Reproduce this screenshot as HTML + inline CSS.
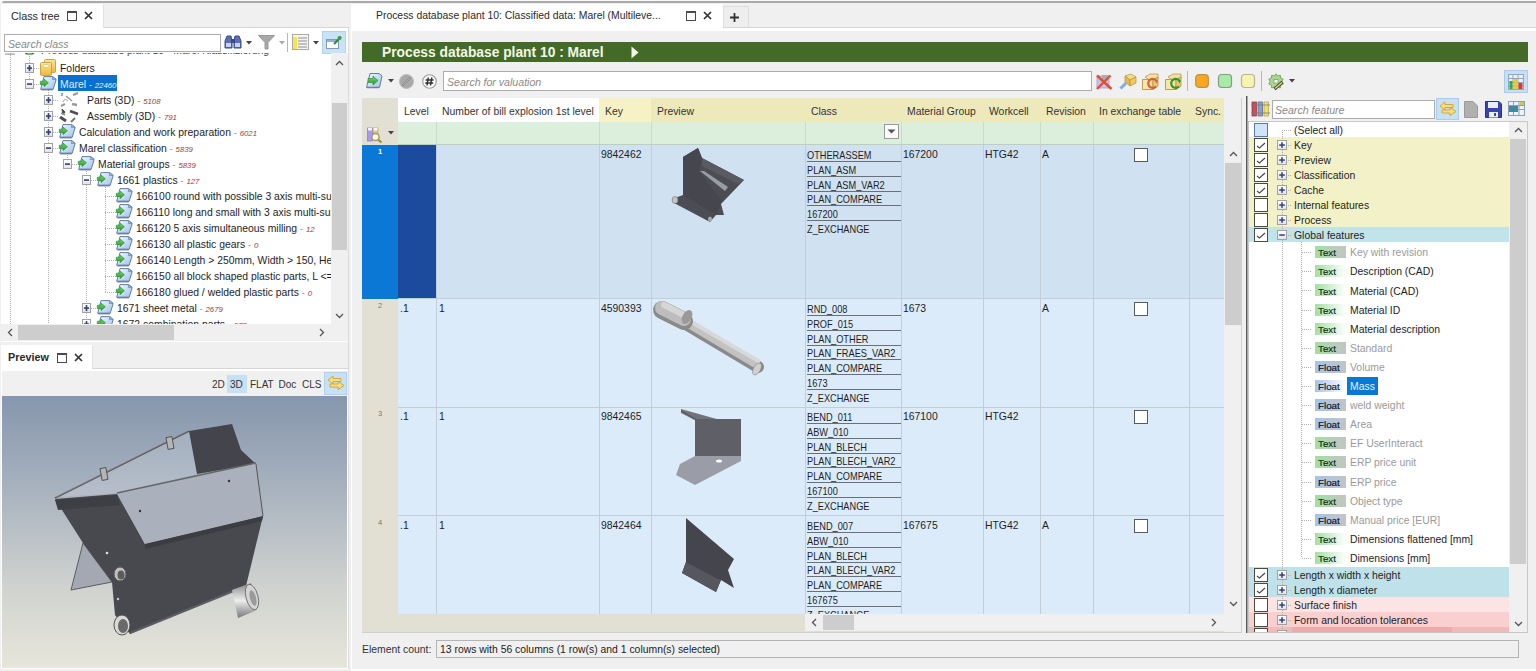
<!DOCTYPE html><html><head><meta charset="utf-8"><style>
*{margin:0;padding:0;box-sizing:border-box}
html,body{width:1536px;height:671px;overflow:hidden}
body{background:#f0f0f0;font-family:"Liberation Sans",sans-serif;font-size:10.4px;color:#1e1e1e;position:relative}
.a{position:absolute}
.t{position:absolute;white-space:nowrap;line-height:12px}
.cnt{font-style:italic;color:#a8383c;font-size:7.8px}
.dash{color:#888;font-size:9px}
.clip{position:absolute;overflow:hidden}
svg{position:absolute;overflow:visible}
</style></head><body>
<svg width="0" height="0" style="position:absolute"><defs>
<linearGradient id="gpage" x1="0" y1="0" x2="1" y2="1"><stop offset="0" stop-color="#f4f9ff"/><stop offset="1" stop-color="#9fc1ea"/></linearGradient>
<linearGradient id="gfold" x1="0" y1="0" x2="0" y2="1"><stop offset="0" stop-color="#fbe59a"/><stop offset="1" stop-color="#f2b53c"/></linearGradient>
<linearGradient id="garrow" x1="0" y1="0" x2="0" y2="1"><stop offset="0" stop-color="#7fd86a"/><stop offset="1" stop-color="#1f9a2a"/></linearGradient>
<linearGradient id="gbox" x1="0" y1="0" x2="0" y2="1"><stop offset="0" stop-color="#ffffff"/><stop offset="1" stop-color="#dfe3ea"/></linearGradient>
<linearGradient id="gprev" x1="0" y1="0" x2="0" y2="1"><stop offset="0" stop-color="#8797ad"/><stop offset="0.55" stop-color="#b9c0c6"/><stop offset="1" stop-color="#e6e5da"/></linearGradient>
<linearGradient id="grod" x1="0" y1="0" x2="0.3" y2="1"><stop offset="0" stop-color="#c9c9c9"/><stop offset="0.5" stop-color="#e0e0e0"/><stop offset="1" stop-color="#777"/></linearGradient>
<linearGradient id="gtube" x1="0" y1="0" x2="0" y2="1"><stop offset="0" stop-color="#888"/><stop offset="0.5" stop-color="#eee"/><stop offset="1" stop-color="#777"/></linearGradient>
</defs></svg>
<div class="a" style="left:0px;top:0px;width:1536px;height:3px;background:#fafafa"></div>
<div class="a" style="left:2px;top:1px;width:1534px;height:2px;background:#aaaaaa;border-radius:3px 0 0 0"></div>
<div class="a" style="left:1px;top:4px;width:102px;height:25px;background:#fff"></div>
<div class="a" style="left:103px;top:27px;width:246px;height:1px;background:#d6d6d6"></div>
<div class="a" style="left:103px;top:5px;width:1px;height:23px;background:#e2e2e2"></div>
<div class="t" style="left:11px;top:10px;font-size:10.8px;color:#2a2a2a">Class tree</div>
<div class="a" style="left:67px;top:11px;width:10px;height:10px;border:1.3px solid #4a4a4a;border-top-width:2.3px"></div>
<svg style="left:84px;top:11px" width="9" height="9" viewBox="0 0 9 9"><path d="M1 1L8 8M8 1L1 8" stroke="#333" stroke-width="1.7"/></svg>
<div class="a" style="left:1px;top:28px;width:348px;height:314px;background:#fff"></div>
<div class="a" style="left:348px;top:28px;width:1px;height:314px;background:#dcdcdc"></div>
<div class="a" style="left:4px;top:34px;width:217px;height:18px;background:#fff;border:1px solid #acacac"></div>
<div class="t" style="left:8px;top:38px;font-style:italic;color:#8a8a8a;font-size:10.6px">Search class</div>
<svg style="left:224px;top:35px" width="18" height="15" viewBox="0 0 18 15"><path d="M1 13V6L3 1H7L8 6V13Z" fill="#5c6fb0" stroke="#3a4a8a"/><path d="M10 13V6L11 1H15L17 6V13Z" fill="#5c6fb0" stroke="#3a4a8a"/><rect x="2" y="8" width="5" height="4" fill="#c9d2f0"/><rect x="11" y="8" width="5" height="4" fill="#c9d2f0"/><rect x="7" y="4" width="4" height="4" fill="#3a4a8a"/></svg>
<svg style="left:246px;top:41px" width="6" height="4" viewBox="0 0 6 4"><path d="M0 0H6L3 3.5Z" fill="#444"/></svg>
<svg style="left:258px;top:35px" width="17" height="15" viewBox="0 0 17 15"><path d="M0.5 0.5H16.5L10 7.5V14H7V7.5Z" fill="#a8a8a8" stroke="#999"/></svg>
<svg style="left:279px;top:41px" width="6" height="4" viewBox="0 0 6 4"><path d="M0 0H6L3 3.5Z" fill="#aaa"/></svg>
<div class="a" style="left:287px;top:33px;width:1px;height:19px;background:#b8b8b8"></div>
<svg style="left:292px;top:34px" width="17" height="17" viewBox="0 0 17 17"><rect x="0.5" y="0.5" width="16" height="15" fill="#f4f4f4" stroke="#aaa"/><rect x="1" y="3" width="4" height="12" fill="#f6e64a"/><path d="M6 4H15M6 7H15M6 10H15M6 13H15" stroke="#b0b0b0" stroke-width="1.4"/></svg>
<svg style="left:313px;top:41px" width="6" height="4" viewBox="0 0 6 4"><path d="M0 0H6L3 3.5Z" fill="#444"/></svg>
<div class="a" style="left:322px;top:31px;width:24px;height:23px;background:#c8e2f8;border:1px solid #b2d2ee"></div>
<svg style="left:326px;top:35px" width="16" height="14" viewBox="0 0 16 14"><rect x="0.5" y="4.5" width="12" height="9" fill="#fff" stroke="#8a9ab0"/><rect x="1" y="5" width="11" height="2" fill="#9ab0c8"/><path d="M8 9L15 2" stroke="#2f8a3a" stroke-width="2.2"/><circle cx="13.5" cy="3" r="2" fill="#3aa048"/></svg>
<div class="clip" style="left:1px;top:53px;width:330px;height:271px">
<div class="a" style="left:9px;top:0px;width:1px;height:271px;background:repeating-linear-gradient(#b0b0b0 0 1px,transparent 1px 2px)"></div>
<div class="a" style="left:28px;top:3px;width:1px;height:28px;background:repeating-linear-gradient(#b0b0b0 0 1px,transparent 1px 2px)"></div>
<div class="a" style="left:47px;top:35px;width:1px;height:236px;background:repeating-linear-gradient(#b0b0b0 0 1px,transparent 1px 2px)"></div>
<div class="a" style="left:66px;top:100px;width:1px;height:11px;background:repeating-linear-gradient(#b0b0b0 0 1px,transparent 1px 2px)"></div>
<div class="a" style="left:85px;top:116px;width:1px;height:155px;background:repeating-linear-gradient(#b0b0b0 0 1px,transparent 1px 2px)"></div>
<div class="a" style="left:104px;top:132px;width:1px;height:107px;background:repeating-linear-gradient(#b0b0b0 0 1px,transparent 1px 2px)"></div>
<div class="t" style="left:40px;top:-8px;color:#444">Process database plant 10 - Marel Klassifizierung</div>
<svg style="left:20px;top:-7px" width="17" height="10" viewBox="0 0 17 10"><path d="M1 4L16 4L12 8.5L5 8.5Z" fill="#556"/><ellipse cx="8.5" cy="7" rx="2.5" ry="2" fill="#5ac85a"/></svg>
<svg style="left:4px;top:0px" width="10" height="2" viewBox="0 0 10 2"><rect x="0" y="0.5" width="10" height="1.2" fill="#999"/></svg>
<svg style="left:24px;top:10px" width="9" height="10" viewBox="0 0 9 10"><rect x="0.5" y="0.5" width="8" height="9" fill="url(#gbox)" stroke="#a2a2a2"/><rect x="2" y="4.3" width="5" height="1.6" fill="#34427a"/><rect x="3.7" y="2.1" width="1.6" height="6" fill="#34427a"/></svg>
<div class="a" style="left:33px;top:15px;width:6px;height:1px;background:repeating-linear-gradient(90deg,#b0b0b0 0 1px,transparent 1px 2px)"></div>
<svg style="left:39px;top:6px" width="17" height="17" viewBox="0 0 17 17"><rect x="4.5" y="0.5" width="11" height="13" rx="1" fill="url(#gfold)" stroke="#caa24a"/><rect x="0.5" y="3.5" width="11" height="13" rx="1" fill="url(#gfold)" stroke="#caa24a"/><rect x="3" y="5.5" width="6" height="3" rx="1.2" fill="#fff4cf" stroke="#d9b45a" stroke-width="0.6"/></svg>
<div class="t" style="left:59px;top:10px;">Folders</div>
<svg style="left:24px;top:26px" width="9" height="10" viewBox="0 0 9 10"><rect x="0.5" y="0.5" width="8" height="9" fill="url(#gbox)" stroke="#a2a2a2"/><rect x="2" y="4.3" width="5" height="1.6" fill="#34427a"/></svg>
<div class="a" style="left:33px;top:31px;width:6px;height:1px;background:repeating-linear-gradient(90deg,#b0b0b0 0 1px,transparent 1px 2px)"></div>
<svg style="left:39px;top:23px" width="17" height="15" viewBox="0 0 17 15"><path d="M4 0.6H12.7L16.2 3.4L13.2 13.3H0.7Z" fill="url(#gpage)" stroke="#5d7fae" stroke-width="1"/><path d="M12.7 0.8L12.3 3.6L16 3.4Z" fill="#9ab4dc" stroke="#5d7fae" stroke-width="0.6"/><path d="M12.8 13.6H1.2" stroke="#6f7f9a" stroke-width="1.6"/><path d="M0.3 5.2H4V3L8.4 6.8L4 10.6V8.5H0.3Z" fill="url(#garrow)" stroke="#1d8a26" stroke-width="0.6"/></svg>
<div class="a" style="left:57px;top:22px;width:59px;height:16px;background:#0a6fcf"></div>
<div class="t" style="left:59px;top:26px;color:#dff0ff">Marel <span style="font-size:9px">-</span> <span class="cnt" style="color:#e8f4ff">22460</span></div>
<svg style="left:43px;top:42px" width="9" height="10" viewBox="0 0 9 10"><rect x="0.5" y="0.5" width="8" height="9" fill="url(#gbox)" stroke="#a2a2a2"/><rect x="2" y="4.3" width="5" height="1.6" fill="#34427a"/><rect x="3.7" y="2.1" width="1.6" height="6" fill="#34427a"/></svg>
<div class="a" style="left:52px;top:47px;width:6px;height:1px;background:repeating-linear-gradient(90deg,#b0b0b0 0 1px,transparent 1px 2px)"></div>
<svg style="left:59px;top:39px" width="19" height="15" viewBox="0 0 19 15"><g stroke="#9a9a9a" fill="none"><path d="M1 1L3 4M3 1L1 4"/><path d="M13 3L18 1" stroke-width="2"/><path d="M6 4L12 9" stroke-width="1.5"/><path d="M3 10C4 7 6 7 8 9"/><path d="M1 14L5 12" stroke-width="2"/><path d="M12 12L17 13" stroke-width="2.5"/></g></svg>
<div class="t" style="left:86px;top:42px;">Parts (3D) <span class="dash">-</span> <span class="cnt">5108</span></div>
<svg style="left:43px;top:58px" width="9" height="10" viewBox="0 0 9 10"><rect x="0.5" y="0.5" width="8" height="9" fill="url(#gbox)" stroke="#a2a2a2"/><rect x="2" y="4.3" width="5" height="1.6" fill="#34427a"/><rect x="3.7" y="2.1" width="1.6" height="6" fill="#34427a"/></svg>
<div class="a" style="left:52px;top:63px;width:6px;height:1px;background:repeating-linear-gradient(90deg,#b0b0b0 0 1px,transparent 1px 2px)"></div>
<svg style="left:59px;top:55px" width="19" height="15" viewBox="0 0 19 15"><g stroke="#4e4e4e" fill="#4e4e4e"><path d="M2 1L5 4L3 7Z"/><path d="M10 3L18 6" stroke-width="2.5"/><path d="M0 9L6 13" stroke-width="3"/><path d="M11 14L15 10" stroke-width="2" stroke="#777"/><path d="M1 5L5 7" stroke="#999" stroke-width="1.5"/></g></svg>
<div class="t" style="left:86px;top:58px;">Assembly (3D) <span class="dash">-</span> <span class="cnt">791</span></div>
<svg style="left:43px;top:74px" width="9" height="10" viewBox="0 0 9 10"><rect x="0.5" y="0.5" width="8" height="9" fill="url(#gbox)" stroke="#a2a2a2"/><rect x="2" y="4.3" width="5" height="1.6" fill="#34427a"/><rect x="3.7" y="2.1" width="1.6" height="6" fill="#34427a"/></svg>
<div class="a" style="left:52px;top:79px;width:6px;height:1px;background:repeating-linear-gradient(90deg,#b0b0b0 0 1px,transparent 1px 2px)"></div>
<svg style="left:58px;top:71px" width="17" height="15" viewBox="0 0 17 15"><path d="M4 0.6H12.7L16.2 3.4L13.2 13.3H0.7Z" fill="url(#gpage)" stroke="#5d7fae" stroke-width="1"/><path d="M12.7 0.8L12.3 3.6L16 3.4Z" fill="#9ab4dc" stroke="#5d7fae" stroke-width="0.6"/><path d="M12.8 13.6H1.2" stroke="#6f7f9a" stroke-width="1.6"/><path d="M0.3 5.2H4V3L8.4 6.8L4 10.6V8.5H0.3Z" fill="url(#garrow)" stroke="#1d8a26" stroke-width="0.6"/></svg>
<div class="t" style="left:78px;top:74px;">Calculation and work preparation <span class="dash">-</span> <span class="cnt">6021</span></div>
<svg style="left:43px;top:90px" width="9" height="10" viewBox="0 0 9 10"><rect x="0.5" y="0.5" width="8" height="9" fill="url(#gbox)" stroke="#a2a2a2"/><rect x="2" y="4.3" width="5" height="1.6" fill="#34427a"/></svg>
<div class="a" style="left:52px;top:95px;width:6px;height:1px;background:repeating-linear-gradient(90deg,#b0b0b0 0 1px,transparent 1px 2px)"></div>
<svg style="left:58px;top:87px" width="17" height="15" viewBox="0 0 17 15"><path d="M4 0.6H12.7L16.2 3.4L13.2 13.3H0.7Z" fill="url(#gpage)" stroke="#5d7fae" stroke-width="1"/><path d="M12.7 0.8L12.3 3.6L16 3.4Z" fill="#9ab4dc" stroke="#5d7fae" stroke-width="0.6"/><path d="M12.8 13.6H1.2" stroke="#6f7f9a" stroke-width="1.6"/><path d="M0.3 5.2H4V3L8.4 6.8L4 10.6V8.5H0.3Z" fill="url(#garrow)" stroke="#1d8a26" stroke-width="0.6"/></svg>
<div class="t" style="left:78px;top:90px;">Marel classification <span class="dash">-</span> <span class="cnt">5839</span></div>
<svg style="left:62px;top:106px" width="9" height="10" viewBox="0 0 9 10"><rect x="0.5" y="0.5" width="8" height="9" fill="url(#gbox)" stroke="#a2a2a2"/><rect x="2" y="4.3" width="5" height="1.6" fill="#34427a"/></svg>
<div class="a" style="left:71px;top:111px;width:6px;height:1px;background:repeating-linear-gradient(90deg,#b0b0b0 0 1px,transparent 1px 2px)"></div>
<svg style="left:77px;top:103px" width="17" height="15" viewBox="0 0 17 15"><path d="M4 0.6H12.7L16.2 3.4L13.2 13.3H0.7Z" fill="url(#gpage)" stroke="#5d7fae" stroke-width="1"/><path d="M12.7 0.8L12.3 3.6L16 3.4Z" fill="#9ab4dc" stroke="#5d7fae" stroke-width="0.6"/><path d="M12.8 13.6H1.2" stroke="#6f7f9a" stroke-width="1.6"/><path d="M0.3 5.2H4V3L8.4 6.8L4 10.6V8.5H0.3Z" fill="url(#garrow)" stroke="#1d8a26" stroke-width="0.6"/></svg>
<div class="t" style="left:97px;top:106px;">Material groups <span class="dash">-</span> <span class="cnt">5839</span></div>
<svg style="left:81px;top:122px" width="9" height="10" viewBox="0 0 9 10"><rect x="0.5" y="0.5" width="8" height="9" fill="url(#gbox)" stroke="#a2a2a2"/><rect x="2" y="4.3" width="5" height="1.6" fill="#34427a"/></svg>
<div class="a" style="left:90px;top:127px;width:6px;height:1px;background:repeating-linear-gradient(90deg,#b0b0b0 0 1px,transparent 1px 2px)"></div>
<svg style="left:96px;top:119px" width="17" height="15" viewBox="0 0 17 15"><path d="M4 0.6H12.7L16.2 3.4L13.2 13.3H0.7Z" fill="url(#gpage)" stroke="#5d7fae" stroke-width="1"/><path d="M12.7 0.8L12.3 3.6L16 3.4Z" fill="#9ab4dc" stroke="#5d7fae" stroke-width="0.6"/><path d="M12.8 13.6H1.2" stroke="#6f7f9a" stroke-width="1.6"/><path d="M0.3 5.2H4V3L8.4 6.8L4 10.6V8.5H0.3Z" fill="url(#garrow)" stroke="#1d8a26" stroke-width="0.6"/></svg>
<div class="t" style="left:116px;top:122px;">1661 plastics <span class="dash">-</span> <span class="cnt">127</span></div>
<div class="a" style="left:104px;top:143px;width:11px;height:1px;background:repeating-linear-gradient(90deg,#b0b0b0 0 1px,transparent 1px 2px)"></div>
<svg style="left:115px;top:135px" width="17" height="15" viewBox="0 0 17 15"><path d="M4 0.6H12.7L16.2 3.4L13.2 13.3H0.7Z" fill="url(#gpage)" stroke="#5d7fae" stroke-width="1"/><path d="M12.7 0.8L12.3 3.6L16 3.4Z" fill="#9ab4dc" stroke="#5d7fae" stroke-width="0.6"/><path d="M12.8 13.6H1.2" stroke="#6f7f9a" stroke-width="1.6"/><path d="M0.3 5.2H4V3L8.4 6.8L4 10.6V8.5H0.3Z" fill="url(#garrow)" stroke="#1d8a26" stroke-width="0.6"/></svg>
<div class="t" style="left:135px;top:138px;">166100 round with possible 3 axis multi-surface milling</div>
<div class="a" style="left:104px;top:159px;width:11px;height:1px;background:repeating-linear-gradient(90deg,#b0b0b0 0 1px,transparent 1px 2px)"></div>
<svg style="left:115px;top:151px" width="17" height="15" viewBox="0 0 17 15"><path d="M4 0.6H12.7L16.2 3.4L13.2 13.3H0.7Z" fill="url(#gpage)" stroke="#5d7fae" stroke-width="1"/><path d="M12.7 0.8L12.3 3.6L16 3.4Z" fill="#9ab4dc" stroke="#5d7fae" stroke-width="0.6"/><path d="M12.8 13.6H1.2" stroke="#6f7f9a" stroke-width="1.6"/><path d="M0.3 5.2H4V3L8.4 6.8L4 10.6V8.5H0.3Z" fill="url(#garrow)" stroke="#1d8a26" stroke-width="0.6"/></svg>
<div class="t" style="left:135px;top:154px;">166110 long and small with 3 axis multi-surface milling</div>
<div class="a" style="left:104px;top:175px;width:11px;height:1px;background:repeating-linear-gradient(90deg,#b0b0b0 0 1px,transparent 1px 2px)"></div>
<svg style="left:115px;top:167px" width="17" height="15" viewBox="0 0 17 15"><path d="M4 0.6H12.7L16.2 3.4L13.2 13.3H0.7Z" fill="url(#gpage)" stroke="#5d7fae" stroke-width="1"/><path d="M12.7 0.8L12.3 3.6L16 3.4Z" fill="#9ab4dc" stroke="#5d7fae" stroke-width="0.6"/><path d="M12.8 13.6H1.2" stroke="#6f7f9a" stroke-width="1.6"/><path d="M0.3 5.2H4V3L8.4 6.8L4 10.6V8.5H0.3Z" fill="url(#garrow)" stroke="#1d8a26" stroke-width="0.6"/></svg>
<div class="t" style="left:135px;top:170px;">166120 5 axis simultaneous milling <span class="dash">-</span> <span class="cnt">12</span></div>
<div class="a" style="left:104px;top:191px;width:11px;height:1px;background:repeating-linear-gradient(90deg,#b0b0b0 0 1px,transparent 1px 2px)"></div>
<svg style="left:115px;top:183px" width="17" height="15" viewBox="0 0 17 15"><path d="M4 0.6H12.7L16.2 3.4L13.2 13.3H0.7Z" fill="url(#gpage)" stroke="#5d7fae" stroke-width="1"/><path d="M12.7 0.8L12.3 3.6L16 3.4Z" fill="#9ab4dc" stroke="#5d7fae" stroke-width="0.6"/><path d="M12.8 13.6H1.2" stroke="#6f7f9a" stroke-width="1.6"/><path d="M0.3 5.2H4V3L8.4 6.8L4 10.6V8.5H0.3Z" fill="url(#garrow)" stroke="#1d8a26" stroke-width="0.6"/></svg>
<div class="t" style="left:135px;top:186px;">166130 all plastic gears <span class="dash">-</span> <span class="cnt">0</span></div>
<div class="a" style="left:104px;top:207px;width:11px;height:1px;background:repeating-linear-gradient(90deg,#b0b0b0 0 1px,transparent 1px 2px)"></div>
<svg style="left:115px;top:199px" width="17" height="15" viewBox="0 0 17 15"><path d="M4 0.6H12.7L16.2 3.4L13.2 13.3H0.7Z" fill="url(#gpage)" stroke="#5d7fae" stroke-width="1"/><path d="M12.7 0.8L12.3 3.6L16 3.4Z" fill="#9ab4dc" stroke="#5d7fae" stroke-width="0.6"/><path d="M12.8 13.6H1.2" stroke="#6f7f9a" stroke-width="1.6"/><path d="M0.3 5.2H4V3L8.4 6.8L4 10.6V8.5H0.3Z" fill="url(#garrow)" stroke="#1d8a26" stroke-width="0.6"/></svg>
<div class="t" style="left:135px;top:202px;">166140 Length &gt; 250mm, Width &gt; 150, Height</div>
<div class="a" style="left:104px;top:223px;width:11px;height:1px;background:repeating-linear-gradient(90deg,#b0b0b0 0 1px,transparent 1px 2px)"></div>
<svg style="left:115px;top:215px" width="17" height="15" viewBox="0 0 17 15"><path d="M4 0.6H12.7L16.2 3.4L13.2 13.3H0.7Z" fill="url(#gpage)" stroke="#5d7fae" stroke-width="1"/><path d="M12.7 0.8L12.3 3.6L16 3.4Z" fill="#9ab4dc" stroke="#5d7fae" stroke-width="0.6"/><path d="M12.8 13.6H1.2" stroke="#6f7f9a" stroke-width="1.6"/><path d="M0.3 5.2H4V3L8.4 6.8L4 10.6V8.5H0.3Z" fill="url(#garrow)" stroke="#1d8a26" stroke-width="0.6"/></svg>
<div class="t" style="left:135px;top:218px;">166150 all block shaped plastic parts, L &lt;= 250</div>
<div class="a" style="left:104px;top:239px;width:11px;height:1px;background:repeating-linear-gradient(90deg,#b0b0b0 0 1px,transparent 1px 2px)"></div>
<svg style="left:115px;top:231px" width="17" height="15" viewBox="0 0 17 15"><path d="M4 0.6H12.7L16.2 3.4L13.2 13.3H0.7Z" fill="url(#gpage)" stroke="#5d7fae" stroke-width="1"/><path d="M12.7 0.8L12.3 3.6L16 3.4Z" fill="#9ab4dc" stroke="#5d7fae" stroke-width="0.6"/><path d="M12.8 13.6H1.2" stroke="#6f7f9a" stroke-width="1.6"/><path d="M0.3 5.2H4V3L8.4 6.8L4 10.6V8.5H0.3Z" fill="url(#garrow)" stroke="#1d8a26" stroke-width="0.6"/></svg>
<div class="t" style="left:135px;top:234px;">166180 glued / welded plastic parts <span class="dash">-</span> <span class="cnt">0</span></div>
<svg style="left:81px;top:250px" width="9" height="10" viewBox="0 0 9 10"><rect x="0.5" y="0.5" width="8" height="9" fill="url(#gbox)" stroke="#a2a2a2"/><rect x="2" y="4.3" width="5" height="1.6" fill="#34427a"/><rect x="3.7" y="2.1" width="1.6" height="6" fill="#34427a"/></svg>
<div class="a" style="left:90px;top:255px;width:6px;height:1px;background:repeating-linear-gradient(90deg,#b0b0b0 0 1px,transparent 1px 2px)"></div>
<svg style="left:96px;top:247px" width="17" height="15" viewBox="0 0 17 15"><path d="M4 0.6H12.7L16.2 3.4L13.2 13.3H0.7Z" fill="url(#gpage)" stroke="#5d7fae" stroke-width="1"/><path d="M12.7 0.8L12.3 3.6L16 3.4Z" fill="#9ab4dc" stroke="#5d7fae" stroke-width="0.6"/><path d="M12.8 13.6H1.2" stroke="#6f7f9a" stroke-width="1.6"/><path d="M0.3 5.2H4V3L8.4 6.8L4 10.6V8.5H0.3Z" fill="url(#garrow)" stroke="#1d8a26" stroke-width="0.6"/></svg>
<div class="t" style="left:116px;top:250px;">1671 sheet metal <span class="dash">-</span> <span class="cnt">2679</span></div>
<svg style="left:81px;top:266px" width="9" height="10" viewBox="0 0 9 10"><rect x="0.5" y="0.5" width="8" height="9" fill="url(#gbox)" stroke="#a2a2a2"/><rect x="2" y="4.3" width="5" height="1.6" fill="#34427a"/><rect x="3.7" y="2.1" width="1.6" height="6" fill="#34427a"/></svg>
<div class="a" style="left:90px;top:271px;width:6px;height:1px;background:repeating-linear-gradient(90deg,#b0b0b0 0 1px,transparent 1px 2px)"></div>
<svg style="left:96px;top:263px" width="17" height="15" viewBox="0 0 17 15"><path d="M4 0.6H12.7L16.2 3.4L13.2 13.3H0.7Z" fill="url(#gpage)" stroke="#5d7fae" stroke-width="1"/><path d="M12.7 0.8L12.3 3.6L16 3.4Z" fill="#9ab4dc" stroke="#5d7fae" stroke-width="0.6"/><path d="M12.8 13.6H1.2" stroke="#6f7f9a" stroke-width="1.6"/><path d="M0.3 5.2H4V3L8.4 6.8L4 10.6V8.5H0.3Z" fill="url(#garrow)" stroke="#1d8a26" stroke-width="0.6"/></svg>
<div class="t" style="left:116px;top:266px;">1672 combination parts <span class="dash">-</span> <span class="cnt">575</span></div>
</div>
<div class="a" style="left:331px;top:53px;width:17px;height:271px;background:#f0f0f0"></div>
<svg style="left:335px;top:60px" width="9" height="6" viewBox="0 0 9 6"><path d="M1 5L4.5 1.5L8 5" stroke="#555" stroke-width="1.3" fill="none"/></svg>
<div class="a" style="left:332px;top:103px;width:15px;height:147px;background:#cdcdcd"></div>
<svg style="left:335px;top:313px" width="9" height="6" viewBox="0 0 9 6"><path d="M1 1L4.5 4.5L8 1" stroke="#555" stroke-width="1.3" fill="none"/></svg>
<div class="a" style="left:1px;top:324px;width:347px;height:17px;background:#f0f0f0"></div>
<svg style="left:7px;top:328px" width="6" height="9" viewBox="0 0 6 9"><path d="M5 1L1.5 4.5L5 8" stroke="#555" stroke-width="1.3" fill="none"/></svg>
<div class="a" style="left:18px;top:325px;width:156px;height:15px;background:#cdcdcd"></div>
<svg style="left:319px;top:328px" width="6" height="9" viewBox="0 0 6 9"><path d="M1 1L4.5 4.5L1 8" stroke="#555" stroke-width="1.3" fill="none"/></svg>
<div class="a" style="left:331px;top:324px;width:17px;height:17px;background:#f0f0f0"></div>
<div class="a" style="left:1px;top:345px;width:91px;height:25px;background:#fff"></div>
<div class="a" style="left:92px;top:368px;width:257px;height:1px;background:#d6d6d6"></div>
<div class="a" style="left:92px;top:346px;width:1px;height:23px;background:#e2e2e2"></div>
<div class="t" style="left:8px;top:351px;font-weight:bold;font-size:10.8px;color:#2a2a2a">Preview</div>
<div class="a" style="left:57px;top:353px;width:10px;height:10px;border:1.3px solid #4a4a4a;border-top-width:2.3px"></div>
<svg style="left:74px;top:353px" width="9" height="9" viewBox="0 0 9 9"><path d="M1 1L8 8M8 1L1 8" stroke="#333" stroke-width="1.7"/></svg>
<div class="a" style="left:1px;top:369px;width:348px;height:300px;background:#fff"></div>
<div class="a" style="left:2px;top:371px;width:346px;height:25px;background:#f0f0f0"></div>
<div class="t" style="left:212px;top:379px;color:#333;font-size:10px">2D</div>
<div class="a" style="left:227px;top:375px;width:20px;height:18px;background:#c6e0f6"></div>
<div class="t" style="left:230px;top:379px;color:#333;font-size:10px">3D</div>
<div class="t" style="left:250px;top:379px;color:#333;font-size:10px">FLAT</div>
<div class="t" style="left:278.5px;top:379px;color:#333;font-size:10px">Doc</div>
<div class="t" style="left:302px;top:379px;color:#333;font-size:10px">CLS</div>
<div class="a" style="left:324px;top:372px;width:23px;height:23px;background:#c6e0f6;border:1px solid #b0d2ef"></div>
<svg style="left:327px;top:375px" width="18" height="16" viewBox="0 0 18 16"><path d="M6 1L1 5L6 9V6.5H14V3.5H6Z" fill="#f7df7a" stroke="#c9a43a" stroke-width="0.9"/><path d="M11 6.5L17 10.5L11 14.5V12H3V9H11Z" fill="#f7df7a" stroke="#c9a43a" stroke-width="0.9"/></svg>
<div class="a" style="left:2px;top:396px;width:345px;height:272px;background:linear-gradient(#8696ad 0%,#a9b3bf 35%,#cfd2cf 70%,#e7e6db 100%)"></div>
<svg style="left:2px;top:396px" width="345" height="272" viewBox="0 0 345 272"><g transform="translate(-2,-396)"><path d="M83 543L71 590L112 582Z" fill="#a3a8b3" stroke="#444" stroke-width="0.8"/><path d="M55 499L117 494L145 544L263 516L246 586L130 634L115 615L112 582L83 543Z" fill="#48494f"/><path d="M55 500L117 495L120 505L58 510Z" fill="#3e3f45"/><path d="M55 497L189 431L197 474L117 493Z" fill="rgba(230,234,240,0.2)"/><path d="M55 498L189 431" stroke="#5a5a5a" stroke-width="1.8"/><path d="M56 497L189 430" stroke="#aab" stroke-width="0.5"/><path d="M189 431L232 424L241 450L256 464L197 474Z" fill="#44454c"/><path d="M117 493L256 463L263 516L145 544Z" fill="#aab1bc"/><path d="M256 464L263 516" stroke="#555" stroke-width="1"/><path d="M117 493L256 463" stroke="#666" stroke-width="1.5"/><path d="M145 544L263 516L262 521L145 549Z" fill="#3c3d43"/><path d="M130 633L246 586" stroke="#5c5d63" stroke-width="2"/><path d="M232 590L251 583L257 610L238 618Z" fill="url(#gtube)"/><ellipse cx="252" cy="597" rx="6" ry="13" transform="rotate(-15 252 597)" fill="#d4d4d4" stroke="#666" stroke-width="0.8"/><ellipse cx="253" cy="598" rx="3" ry="8" transform="rotate(-15 253 598)" fill="#9a9a9a"/><ellipse cx="122" cy="625" rx="8" ry="10" fill="#d9d9d9" stroke="#555"/><ellipse cx="123" cy="626" rx="5" ry="7" fill="#6a6a6a"/><ellipse cx="120" cy="574" rx="6" ry="7" fill="#c0c0c0" stroke="#555"/><ellipse cx="121" cy="575" rx="3.5" ry="4.5" fill="#5c5c5c"/><circle cx="107" cy="553" r="1.3" fill="#ddd"/><circle cx="118" cy="599" r="1.2" fill="#ccc"/><circle cx="140" cy="511" r="1.2" fill="#333"/><circle cx="229" cy="481" r="1.2" fill="#333"/><rect x="101" y="468" width="6" height="12" fill="#b5b5b5" stroke="#444" stroke-width="0.8" transform="rotate(-10 104 474)"/><rect x="167" y="437" width="6" height="12" fill="#b5b5b5" stroke="#444" stroke-width="0.8" transform="rotate(-10 170 443)"/></g></svg>
<div class="a" style="left:348px;top:342px;width:1px;height:327px;background:#dcdcdc"></div>
<div class="a" style="left:351px;top:4px;width:372px;height:25px;background:#fff"></div>
<div class="t" style="left:376px;top:10px;font-size:10.4px;color:#2a2a2a">Process database plant 10: Classified data: Marel (Multileve...</div>
<div class="a" style="left:686px;top:11px;width:10px;height:10px;border:1.3px solid #4a4a4a;border-top-width:2.3px"></div>
<svg style="left:703px;top:11px" width="9" height="9" viewBox="0 0 9 9"><path d="M1 1L8 8M8 1L1 8" stroke="#333" stroke-width="1.7"/></svg>
<div class="a" style="left:723px;top:6px;width:26px;height:22px;background:#eeeeee;border:1px solid #dedede;border-bottom:none"></div>
<svg style="left:730px;top:13px" width="9" height="9" viewBox="0 0 9 9"><path d="M4.5 0V9M0 4.5H9" stroke="#333" stroke-width="1.8"/></svg>
<div class="a" style="left:723px;top:27px;width:813px;height:1px;background:#d6d6d6"></div>
<div class="a" style="left:351px;top:28px;width:1185px;height:3px;background:#fff"></div>
<div class="a" style="left:351px;top:31px;width:1px;height:638px;background:#fff"></div>
<div class="a" style="left:351px;top:669px;width:1185px;height:2px;background:#fff"></div>
<div class="a" style="left:362px;top:42px;width:1166px;height:20px;background:#446a28"></div>
<div class="t" style="left:382px;top:47px;font-weight:bold;font-size:13.8px;color:#f3f6e6">Process database plant 10 : Marel</div>
<svg style="left:631px;top:46px" width="8" height="13" viewBox="0 0 8 13"><path d="M0.5 0.5L7.5 6.5L0.5 12.5Z" fill="#f3f6e6"/></svg>
<svg style="left:366px;top:73px" width="17" height="16" viewBox="0 0 17 16"><path d="M4 0.5H13L16 3L13.5 14.5H0.5Z" fill="url(#gpage)" stroke="#5d7fae"/><path d="M13 14.5H1" stroke="#6f7f9a" stroke-width="1.5"/><path d="M2 5.5H7V3L12 7.5L7 12V9.5H2Z" fill="url(#garrow)" stroke="#1d8a26" stroke-width="0.6"/></svg>
<svg style="left:388px;top:79px" width="6" height="4" viewBox="0 0 6 4"><path d="M0 0H6L3 3.5Z" fill="#444"/></svg>
<svg style="left:399px;top:74px" width="16" height="15" viewBox="0 0 16 15"><circle cx="7.5" cy="7.5" r="7" fill="#a9a9a9" stroke="#bdbdbd"/><path d="M3.5 11.5L11.5 3.5" stroke="#8a8a8a" stroke-width="1.8"/><path d="M4 11L11 4" stroke="#c8c8c8" stroke-width="0.6"/></svg>
<svg style="left:422px;top:74px" width="16" height="15" viewBox="0 0 16 15"><circle cx="7.5" cy="7.5" r="6.8" fill="#fafafa" stroke="#9a9a9a" stroke-width="1.1"/><path d="M6.3 3.5L5 11.5M9.8 3.5L8.5 11.5M3.6 6H11.6M3.2 9H11.2" stroke="#333" stroke-width="1.5"/></svg>
<div class="a" style="left:443px;top:71px;width:649px;height:20px;background:#fff;border:1px solid #acacac"></div>
<div class="t" style="left:447px;top:76px;font-style:italic;color:#8a8a8a;font-size:10.6px">Search for valuation</div>
<svg style="left:1096px;top:74px" width="17" height="16" viewBox="0 0 17 16"><rect x="1" y="2" width="12" height="12" fill="#c8c0f0" stroke="#a0a0c8" stroke-width="0.8"/><rect x="6" y="1" width="6" height="5" fill="#aab" /><path d="M1 1.5L15.5 15M14.5 1.5L1 15" stroke="#e0502a" stroke-width="2.4"/></svg>
<svg style="left:1119px;top:73px" width="17" height="17" viewBox="0 0 17 17"><path d="M6 3L12 1L17 4L11 7Z" fill="#f4dc88" stroke="#b8943a" stroke-width="0.7"/><path d="M6 3L11 7V13L6 9Z" fill="#e8b850" stroke="#b8943a" stroke-width="0.7"/><path d="M11 7L17 4V10L11 13Z" fill="#f0c860" stroke="#b8943a" stroke-width="0.7"/><path d="M1.5 15.5L7 10" stroke="#7ab0e8" stroke-width="3"/></svg>
<svg style="left:1142px;top:73px" width="17" height="17" viewBox="0 0 17 17"><path d="M3 4L8 1H16V6L11 9Z" fill="#f4e0a0" stroke="#b8943a" stroke-width="0.7"/><path d="M0.5 6.5H11V16.5H0.5Z" fill="#f6e6a8" stroke="#a88a3a" stroke-width="0.8"/><path d="M11 6.5L16 4V13L11 16.5Z" fill="#e8c870" stroke="#a88a3a" stroke-width="0.7"/><path d="M14.5 8A4.5 4.5 0 1 0 14 13.5" fill="none" stroke="#e05a3a" stroke-width="2.2"/><path d="M12.5 6.5L16 7.5L14.5 10.5Z" fill="#e05a3a"/></svg>
<svg style="left:1165px;top:73px" width="17" height="17" viewBox="0 0 17 17"><path d="M3 4L8 1H16V6L11 9Z" fill="#f4e0a0" stroke="#b8943a" stroke-width="0.7"/><path d="M0.5 6.5H11V16.5H0.5Z" fill="#f6e6a8" stroke="#a88a3a" stroke-width="0.8"/><path d="M11 6.5L16 4V13L11 16.5Z" fill="#e8c870" stroke="#a88a3a" stroke-width="0.7"/><path d="M14.5 8A4.5 4.5 0 1 0 14 13.5" fill="none" stroke="#2a9a2a" stroke-width="2.2"/><path d="M12.5 6.5L16 7.5L14.5 10.5Z" fill="#2a9a2a"/></svg>
<div class="a" style="left:1187px;top:71px;width:1px;height:20px;background:#b8b8b8"></div>
<svg style="left:1195px;top:74px" width="14" height="14" viewBox="0 0 14 14"><rect x="0.7" y="0.7" width="12.6" height="12.6" rx="3" fill="#f8a820" stroke="#c09050" stroke-width="1.2"/></svg>
<svg style="left:1218px;top:74px" width="14" height="14" viewBox="0 0 14 14"><rect x="0.5" y="0.5" width="13" height="13" rx="3" fill="#a8eaa8" stroke="#80a080" stroke-width="1.2"/></svg>
<svg style="left:1241px;top:74px" width="14" height="14" viewBox="0 0 14 14"><rect x="0.5" y="0.5" width="13" height="13" rx="3" fill="#f8f4b0" stroke="#b8b490" stroke-width="1.2"/></svg>
<div class="a" style="left:1261px;top:71px;width:1px;height:20px;background:#b8b8b8"></div>
<svg style="left:1268px;top:73px" width="17" height="17" viewBox="0 0 17 17"><path d="M8 0.8L9.6 3L12.3 2.2L12.6 5L15.2 6.2L13.8 8.6L15.2 11L12.6 12.2L12.3 15L9.6 14.2L8 16.4L6.4 14.2L3.7 15L3.4 12.2L0.8 11L2.2 8.6L0.8 6.2L3.4 5L3.7 2.2L6.4 3Z" fill="#a8d890" stroke="#6a9a4a" stroke-width="0.8"/><rect x="6" y="6.5" width="4" height="3.5" fill="#fff" stroke="#6a8a5a" stroke-width="0.6"/><path d="M6.5 16L14.5 9" stroke="#3a3a3a" stroke-width="3"/><path d="M7 15.5L14 9.5" stroke="#f0d870" stroke-width="1.6"/></svg>
<svg style="left:1289px;top:79px" width="6" height="4" viewBox="0 0 6 4"><path d="M0 0H6L3 3.5Z" fill="#444"/></svg>
<div class="a" style="left:1504px;top:70px;width:24px;height:23px;background:#c6e0f6;border:1px solid #a8ccee"></div>
<svg style="left:1508px;top:74px" width="16" height="16" viewBox="0 0 16 16"><rect x="0.5" y="0.5" width="15" height="15" fill="#e8f0f8" stroke="#90a8c8"/><path d="M0.5 4.5H15.5M0.5 8.5H15.5M0.5 12H15.5M5 0.5V15.5M10 0.5V15.5" stroke="#90a8c8"/><rect x="1.5" y="7" width="3" height="8" fill="#3aaa3a"/><rect x="6" y="5" width="3" height="10" fill="#e8c83a"/><rect x="10.5" y="9" width="4" height="6" fill="#d83a3a"/></svg>
<div class="a" style="left:362px;top:98px;width:862px;height:534px;background:#e1e0d2"></div>
<div class="a" style="left:398px;top:98px;width:38px;height:24px;background:#ffffff"></div>
<div class="t" style="left:404px;top:106px;color:#333">Level</div>
<div class="a" style="left:436px;top:98px;width:163px;height:24px;background:#ffffff"></div>
<div class="t" style="left:442px;top:106px;color:#333">Number of bill explosion 1st level</div>
<div class="a" style="left:599px;top:98px;width:52px;height:24px;background:#f6f2c6"></div>
<div class="t" style="left:605px;top:106px;color:#333">Key</div>
<div class="a" style="left:651px;top:98px;width:154px;height:24px;background:#eee9ba"></div>
<div class="t" style="left:657px;top:106px;color:#333">Preview</div>
<div class="a" style="left:805px;top:98px;width:96px;height:24px;background:#eee9ba"></div>
<div class="t" style="left:811px;top:106px;color:#333">Class</div>
<div class="a" style="left:901px;top:98px;width:82px;height:24px;background:#eee9ba"></div>
<div class="t" style="left:907px;top:106px;color:#333">Material Group</div>
<div class="a" style="left:983px;top:98px;width:57px;height:24px;background:#eee9ba"></div>
<div class="t" style="left:989px;top:106px;color:#333">Workcell</div>
<div class="a" style="left:1040px;top:98px;width:53px;height:24px;background:#eee9ba"></div>
<div class="t" style="left:1046px;top:106px;color:#333">Revision</div>
<div class="a" style="left:1093px;top:98px;width:96px;height:24px;background:#eee9ba"></div>
<div class="t" style="left:1099px;top:106px;color:#333">In exchange table</div>
<div class="a" style="left:1189px;top:98px;width:35px;height:24px;background:#eee9ba"></div>
<div class="t" style="left:1195px;top:106px;color:#333">Sync.</div>
<div class="a" style="left:398px;top:122px;width:826px;height:23px;background:#dcefdc"></div>
<div class="a" style="left:436px;top:122px;width:1px;height:23px;background:#c9dcc9"></div>
<div class="a" style="left:599px;top:122px;width:1px;height:23px;background:#c9dcc9"></div>
<div class="a" style="left:651px;top:122px;width:1px;height:23px;background:#c9dcc9"></div>
<div class="a" style="left:805px;top:122px;width:1px;height:23px;background:#c9dcc9"></div>
<div class="a" style="left:901px;top:122px;width:1px;height:23px;background:#c9dcc9"></div>
<div class="a" style="left:983px;top:122px;width:1px;height:23px;background:#c9dcc9"></div>
<div class="a" style="left:1040px;top:122px;width:1px;height:23px;background:#c9dcc9"></div>
<div class="a" style="left:1093px;top:122px;width:1px;height:23px;background:#c9dcc9"></div>
<div class="a" style="left:1189px;top:122px;width:1px;height:23px;background:#c9dcc9"></div>
<div class="a" style="left:884px;top:124px;width:15px;height:15px;background:#fafafa;border:1px solid #9a9a9a"></div>
<svg style="left:887px;top:129px" width="9" height="5" viewBox="0 0 9 5"><path d="M0.5 0.5H8.5L4.5 4.5Z" fill="#555"/></svg>
<div class="a" style="left:398px;top:144px;width:826px;height:1px;background:#bfcfbf"></div>
<svg style="left:367px;top:127px" width="18" height="17" viewBox="0 0 18 17"><rect x="0.5" y="1" width="5" height="13" fill="#a898f0" stroke="#8070c0" stroke-width="0.6"/><rect x="1" y="1" width="4" height="2.5" fill="#f4f0ff"/><rect x="6" y="1" width="5" height="7" fill="#d8c898" stroke="#a89858" stroke-width="0.6"/><rect x="6.5" y="1" width="4" height="2.5" fill="#fff8e8"/><circle cx="8.5" cy="10" r="3.6" fill="#f8f8f8" stroke="#b09a50" stroke-width="1.5"/><path d="M11 12.5L14.5 15.5" stroke="#a08a40" stroke-width="2.2"/></svg>
<svg style="left:388px;top:131px" width="6" height="4" viewBox="0 0 6 4"><path d="M0 0H6L3 3.5Z" fill="#444"/></svg>
<div class="clip" style="left:362px;top:145px;width:862px;height:469px">
<div class="a" style="left:36px;top:0px;width:826px;height:154px;background:#d0e1f1"></div>
<div class="a" style="left:0px;top:0px;width:36px;height:154px;background:#0a78d4"></div>
<div class="a" style="left:36px;top:0px;width:38px;height:154px;background:#1c4a9c"></div>
<div class="t" style="left:16px;top:1px;color:#fff;font-size:7.5px;font-weight:bold">1</div>
<div class="a" style="left:74px;top:0px;width:1px;height:154px;background:#c3cdd8"></div>
<div class="a" style="left:237px;top:0px;width:1px;height:154px;background:#c3cdd8"></div>
<div class="a" style="left:289px;top:0px;width:1px;height:154px;background:#c3cdd8"></div>
<div class="a" style="left:443px;top:0px;width:1px;height:154px;background:#c3cdd8"></div>
<div class="a" style="left:539px;top:0px;width:1px;height:154px;background:#c3cdd8"></div>
<div class="a" style="left:621px;top:0px;width:1px;height:154px;background:#c3cdd8"></div>
<div class="a" style="left:678px;top:0px;width:1px;height:154px;background:#c3cdd8"></div>
<div class="a" style="left:731px;top:0px;width:1px;height:154px;background:#c3cdd8"></div>
<div class="a" style="left:827px;top:0px;width:1px;height:154px;background:#c3cdd8"></div>
<div class="t" style="left:38px;top:4px;"></div>
<div class="t" style="left:77px;top:4px;"></div>
<div class="t" style="left:239px;top:4px;">9842462</div>
<div class="t" style="left:445px;top:4.0px;font-size:10.6px;transform:scaleX(0.87);transform-origin:0 0">OTHERASSEM</div>
<div class="a" style="left:445px;top:16px;width:94px;height:1px;background:#6a6f78"></div>
<div class="t" style="left:445px;top:18.80000000000001px;font-size:10.6px;transform:scaleX(0.87);transform-origin:0 0">PLAN_ASM</div>
<div class="a" style="left:445px;top:31px;width:94px;height:1px;background:#6a6f78"></div>
<div class="t" style="left:445px;top:33.599999999999994px;font-size:10.6px;transform:scaleX(0.87);transform-origin:0 0">PLAN_ASM_VAR2</div>
<div class="a" style="left:445px;top:46px;width:94px;height:1px;background:#6a6f78"></div>
<div class="t" style="left:445px;top:48.400000000000006px;font-size:10.6px;transform:scaleX(0.87);transform-origin:0 0">PLAN_COMPARE</div>
<div class="a" style="left:445px;top:60px;width:94px;height:1px;background:#6a6f78"></div>
<div class="t" style="left:445px;top:63.19999999999999px;font-size:10.6px;transform:scaleX(0.87);transform-origin:0 0">167200</div>
<div class="a" style="left:445px;top:75px;width:94px;height:1px;background:#6a6f78"></div>
<div class="t" style="left:445px;top:78.0px;font-size:10.6px;transform:scaleX(0.87);transform-origin:0 0">Z_EXCHANGE</div>
<div class="t" style="left:541px;top:4px;">167200</div>
<div class="t" style="left:623px;top:4px;">HTG42</div>
<div class="t" style="left:680px;top:4px;">A</div>
<div class="a" style="left:772px;top:3px;width:14px;height:14px;background:#fff;border:1px solid #5a5a5a"></div>
<div class="a" style="left:36px;top:154px;width:826px;height:108px;background:#dcebfa"></div>
<div class="t" style="left:16px;top:155px;color:#777;font-size:7.5px">2</div>
<div class="a" style="left:74px;top:154px;width:1px;height:108px;background:#c3cdd8"></div>
<div class="a" style="left:237px;top:154px;width:1px;height:108px;background:#c3cdd8"></div>
<div class="a" style="left:289px;top:154px;width:1px;height:108px;background:#c3cdd8"></div>
<div class="a" style="left:443px;top:154px;width:1px;height:108px;background:#c3cdd8"></div>
<div class="a" style="left:539px;top:154px;width:1px;height:108px;background:#c3cdd8"></div>
<div class="a" style="left:621px;top:154px;width:1px;height:108px;background:#c3cdd8"></div>
<div class="a" style="left:678px;top:154px;width:1px;height:108px;background:#c3cdd8"></div>
<div class="a" style="left:731px;top:154px;width:1px;height:108px;background:#c3cdd8"></div>
<div class="a" style="left:827px;top:154px;width:1px;height:108px;background:#c3cdd8"></div>
<div class="t" style="left:38px;top:158px;">.1</div>
<div class="t" style="left:77px;top:158px;">1</div>
<div class="t" style="left:239px;top:158px;">4590393</div>
<div class="t" style="left:445px;top:158.0px;font-size:10.6px;transform:scaleX(0.87);transform-origin:0 0">RND_008</div>
<div class="a" style="left:445px;top:170px;width:94px;height:1px;background:#6a6f78"></div>
<div class="t" style="left:445px;top:172.8px;font-size:10.6px;transform:scaleX(0.87);transform-origin:0 0">PROF_015</div>
<div class="a" style="left:445px;top:185px;width:94px;height:1px;background:#6a6f78"></div>
<div class="t" style="left:445px;top:187.60000000000002px;font-size:10.6px;transform:scaleX(0.87);transform-origin:0 0">PLAN_OTHER</div>
<div class="a" style="left:445px;top:200px;width:94px;height:1px;background:#6a6f78"></div>
<div class="t" style="left:445px;top:202.39999999999998px;font-size:10.6px;transform:scaleX(0.87);transform-origin:0 0">PLAN_FRAES_VAR2</div>
<div class="a" style="left:445px;top:214px;width:94px;height:1px;background:#6a6f78"></div>
<div class="t" style="left:445px;top:217.2px;font-size:10.6px;transform:scaleX(0.87);transform-origin:0 0">PLAN_COMPARE</div>
<div class="a" style="left:445px;top:229px;width:94px;height:1px;background:#6a6f78"></div>
<div class="t" style="left:445px;top:232.0px;font-size:10.6px;transform:scaleX(0.87);transform-origin:0 0">1673</div>
<div class="a" style="left:445px;top:244px;width:94px;height:1px;background:#6a6f78"></div>
<div class="t" style="left:445px;top:246.8px;font-size:10.6px;transform:scaleX(0.87);transform-origin:0 0">Z_EXCHANGE</div>
<div class="t" style="left:541px;top:158px;">1673</div>
<div class="t" style="left:623px;top:158px;"></div>
<div class="t" style="left:680px;top:158px;">A</div>
<div class="a" style="left:772px;top:157px;width:14px;height:14px;background:#fff;border:1px solid #5a5a5a"></div>
<div class="a" style="left:36px;top:262px;width:826px;height:108px;background:#dcebfa"></div>
<div class="t" style="left:16px;top:263px;color:#777;font-size:7.5px">3</div>
<div class="a" style="left:74px;top:262px;width:1px;height:108px;background:#c3cdd8"></div>
<div class="a" style="left:237px;top:262px;width:1px;height:108px;background:#c3cdd8"></div>
<div class="a" style="left:289px;top:262px;width:1px;height:108px;background:#c3cdd8"></div>
<div class="a" style="left:443px;top:262px;width:1px;height:108px;background:#c3cdd8"></div>
<div class="a" style="left:539px;top:262px;width:1px;height:108px;background:#c3cdd8"></div>
<div class="a" style="left:621px;top:262px;width:1px;height:108px;background:#c3cdd8"></div>
<div class="a" style="left:678px;top:262px;width:1px;height:108px;background:#c3cdd8"></div>
<div class="a" style="left:731px;top:262px;width:1px;height:108px;background:#c3cdd8"></div>
<div class="a" style="left:827px;top:262px;width:1px;height:108px;background:#c3cdd8"></div>
<div class="t" style="left:38px;top:266px;">.1</div>
<div class="t" style="left:77px;top:266px;">1</div>
<div class="t" style="left:239px;top:266px;">9842465</div>
<div class="t" style="left:445px;top:266.0px;font-size:10.6px;transform:scaleX(0.87);transform-origin:0 0">BEND_011</div>
<div class="a" style="left:445px;top:278px;width:94px;height:1px;background:#6a6f78"></div>
<div class="t" style="left:445px;top:280.8px;font-size:10.6px;transform:scaleX(0.87);transform-origin:0 0">ABW_010</div>
<div class="a" style="left:445px;top:293px;width:94px;height:1px;background:#6a6f78"></div>
<div class="t" style="left:445px;top:295.6px;font-size:10.6px;transform:scaleX(0.87);transform-origin:0 0">PLAN_BLECH</div>
<div class="a" style="left:445px;top:308px;width:94px;height:1px;background:#6a6f78"></div>
<div class="t" style="left:445px;top:310.4px;font-size:10.6px;transform:scaleX(0.87);transform-origin:0 0">PLAN_BLECH_VAR2</div>
<div class="a" style="left:445px;top:322px;width:94px;height:1px;background:#6a6f78"></div>
<div class="t" style="left:445px;top:325.2px;font-size:10.6px;transform:scaleX(0.87);transform-origin:0 0">PLAN_COMPARE</div>
<div class="a" style="left:445px;top:337px;width:94px;height:1px;background:#6a6f78"></div>
<div class="t" style="left:445px;top:340.0px;font-size:10.6px;transform:scaleX(0.87);transform-origin:0 0">167100</div>
<div class="a" style="left:445px;top:352px;width:94px;height:1px;background:#6a6f78"></div>
<div class="t" style="left:445px;top:354.8px;font-size:10.6px;transform:scaleX(0.87);transform-origin:0 0">Z_EXCHANGE</div>
<div class="t" style="left:541px;top:266px;">167100</div>
<div class="t" style="left:623px;top:266px;">HTG42</div>
<div class="t" style="left:680px;top:266px;"></div>
<div class="a" style="left:772px;top:265px;width:14px;height:14px;background:#fff;border:1px solid #5a5a5a"></div>
<div class="a" style="left:36px;top:371px;width:826px;height:98px;background:#dcebfa"></div>
<div class="t" style="left:16px;top:372px;color:#777;font-size:7.5px">4</div>
<div class="a" style="left:74px;top:371px;width:1px;height:98px;background:#c3cdd8"></div>
<div class="a" style="left:237px;top:371px;width:1px;height:98px;background:#c3cdd8"></div>
<div class="a" style="left:289px;top:371px;width:1px;height:98px;background:#c3cdd8"></div>
<div class="a" style="left:443px;top:371px;width:1px;height:98px;background:#c3cdd8"></div>
<div class="a" style="left:539px;top:371px;width:1px;height:98px;background:#c3cdd8"></div>
<div class="a" style="left:621px;top:371px;width:1px;height:98px;background:#c3cdd8"></div>
<div class="a" style="left:678px;top:371px;width:1px;height:98px;background:#c3cdd8"></div>
<div class="a" style="left:731px;top:371px;width:1px;height:98px;background:#c3cdd8"></div>
<div class="a" style="left:827px;top:371px;width:1px;height:98px;background:#c3cdd8"></div>
<div class="t" style="left:38px;top:375px;">.1</div>
<div class="t" style="left:77px;top:375px;">1</div>
<div class="t" style="left:239px;top:375px;">9842464</div>
<div class="t" style="left:445px;top:375.0px;font-size:10.6px;transform:scaleX(0.87);transform-origin:0 0">BEND_007</div>
<div class="a" style="left:445px;top:387px;width:94px;height:1px;background:#6a6f78"></div>
<div class="t" style="left:445px;top:389.79999999999995px;font-size:10.6px;transform:scaleX(0.87);transform-origin:0 0">ABW_010</div>
<div class="a" style="left:445px;top:402px;width:94px;height:1px;background:#6a6f78"></div>
<div class="t" style="left:445px;top:404.6px;font-size:10.6px;transform:scaleX(0.87);transform-origin:0 0">PLAN_BLECH</div>
<div class="a" style="left:445px;top:417px;width:94px;height:1px;background:#6a6f78"></div>
<div class="t" style="left:445px;top:419.4px;font-size:10.6px;transform:scaleX(0.87);transform-origin:0 0">PLAN_BLECH_VAR2</div>
<div class="a" style="left:445px;top:431px;width:94px;height:1px;background:#6a6f78"></div>
<div class="t" style="left:445px;top:434.20000000000005px;font-size:10.6px;transform:scaleX(0.87);transform-origin:0 0">PLAN_COMPARE</div>
<div class="a" style="left:445px;top:446px;width:94px;height:1px;background:#6a6f78"></div>
<div class="t" style="left:445px;top:449.0px;font-size:10.6px;transform:scaleX(0.87);transform-origin:0 0">167675</div>
<div class="a" style="left:445px;top:461px;width:94px;height:1px;background:#6a6f78"></div>
<div class="t" style="left:445px;top:463.79999999999995px;font-size:10.6px;transform:scaleX(0.87);transform-origin:0 0">Z_EXCHANGE</div>
<div class="t" style="left:541px;top:375px;">167675</div>
<div class="t" style="left:623px;top:375px;">HTG42</div>
<div class="t" style="left:680px;top:375px;">A</div>
<div class="a" style="left:772px;top:374px;width:14px;height:14px;background:#fff;border:1px solid #5a5a5a"></div>
<div class="a" style="left:36px;top:153px;width:826px;height:1px;background:#c3cdd8"></div>
<div class="a" style="left:36px;top:262px;width:826px;height:1px;background:#c3cdd8"></div>
<div class="a" style="left:36px;top:370px;width:826px;height:1px;background:#c3cdd8"></div>
</div>
<div class="a" style="left:362px;top:614px;width:862px;height:18px;background:#e1e0d2"></div>
<svg style="left:651px;top:145px" width="154" height="469" viewBox="0 0 154 469"><g transform="translate(-651,-145)"><path d="M698 148L683 157L683 195L672 199L674 203L710 222L716 215L724 215L721 204L744 180L702 158Z" fill="#4c4d54"/><path d="M702 158L744 180L738 184L702 166Z" fill="#5a5b62"/><path d="M700 171L704 171L728 187L725 191Z" fill="#9a9ca4"/><path d="M683 157L698 148L702 158L699 171L713 190L722 201L716 215L683 195Z" fill="#46474e"/><ellipse cx="675" cy="200" rx="3" ry="3.5" fill="#c4c4c4" stroke="#666" stroke-width="0.5"/><ellipse cx="710" cy="219" rx="2" ry="2.5" fill="#aaa"/><path d="M686 324L758 367" stroke="#8a8a8a" stroke-width="12" stroke-linecap="round"/><path d="M686 322L758 365" stroke="#c2c2c2" stroke-width="9"/><path d="M688 320L760 362" stroke="#d8d8d8" stroke-width="4"/><path d="M662 310L684 321" stroke="#8a8a8a" stroke-width="18" stroke-linecap="round"/><path d="M662 308L684 319" stroke="#bdbdbd" stroke-width="14" stroke-linecap="round"/><path d="M664 305L686 316" stroke="#d6d6d6" stroke-width="6" stroke-linecap="round"/><ellipse cx="687" cy="317" rx="4.5" ry="7.5" transform="rotate(30 687 317)" fill="#9a9a9a"/><ellipse cx="757" cy="369" rx="3.5" ry="6.5" transform="rotate(30 757 369)" fill="#d0d0d0" stroke="#888" stroke-width="0.6"/><path d="M681 409L731 423L729 426L706 426L681 413Z" fill="#73747b"/><path d="M681 411L706 425" stroke="#505158" stroke-width="1"/><rect x="695" y="419" width="46" height="37" fill="#5f6067"/><path d="M680 464L695 456L741 456L741 461L695 485L676 475Z" fill="#9a9ca8"/><ellipse cx="719" cy="461" rx="3" ry="1.5" fill="#fff"/><path d="M686 518L734 559L728 570L734 588L721 580L716 592L682 573L686 562Z" fill="#45464d"/><path d="M686 562L716 578L721 580L716 592L682 573Z" fill="#55565e"/></g></svg>
<div class="a" style="left:805px;top:614px;width:419px;height:17px;background:#f0f0f0"></div>
<svg style="left:811px;top:618px" width="6" height="9" viewBox="0 0 6 9"><path d="M5 1L1.5 4.5L5 8" stroke="#555" stroke-width="1.3" fill="none"/></svg>
<div class="a" style="left:823px;top:615px;width:31px;height:15px;background:#cdcdcd"></div>
<svg style="left:1211px;top:618px" width="6" height="9" viewBox="0 0 6 9"><path d="M1 1L4.5 4.5L1 8" stroke="#555" stroke-width="1.3" fill="none"/></svg>
<div class="a" style="left:1224px;top:98px;width:18px;height:534px;background:#f0f0f0"></div>
<div class="a" style="left:1241px;top:98px;width:1px;height:534px;background:#d0d0d0"></div>
<div class="a" style="left:362px;top:632px;width:880px;height:1px;background:#d0d0d0"></div>
<svg style="left:1229px;top:151px" width="9" height="6" viewBox="0 0 9 6"><path d="M1 5L4.5 1.5L8 5" stroke="#555" stroke-width="1.3" fill="none"/></svg>
<div class="a" style="left:1225px;top:163px;width:16px;height:162px;background:#cdcdcd"></div>
<svg style="left:1229px;top:601px" width="9" height="6" viewBox="0 0 9 6"><path d="M1 1L4.5 4.5L8 1" stroke="#555" stroke-width="1.3" fill="none"/></svg>
<div class="a" style="left:1246px;top:96px;width:1px;height:537px;background:#5a5a5a"></div>
<div class="a" style="left:1247px;top:96px;width:1px;height:537px;background:#a8a8a8"></div>
<svg style="left:1251px;top:101px" width="19" height="16" viewBox="0 0 19 16"><rect x="1" y="1" width="4.5" height="14" fill="#d04a5a" stroke="#903040" stroke-width="0.7"/><rect x="7" y="1" width="4.5" height="14" fill="#8aa0c8" stroke="#50688a" stroke-width="0.7"/><rect x="13" y="1" width="4.5" height="14" fill="#f0e070" stroke="#b0a040" stroke-width="0.7"/><path d="M0 4H19M0 12H19" stroke="#7a7a7a" stroke-width="0.8"/></svg>
<div class="a" style="left:1272px;top:100px;width:163px;height:19px;background:#fff;border:1px solid #acacac"></div>
<div class="t" style="left:1275px;top:104px;font-style:italic;color:#8a8a8a;font-size:10.6px">Search feature</div>
<div class="a" style="left:1436px;top:98px;width:23px;height:22px;background:#c6e0f6;border:1px solid #a8ccee"></div>
<svg style="left:1439px;top:101px" width="18" height="16" viewBox="0 0 18 16"><path d="M6 1L1 5L6 9V6.5H14V3.5H6Z" fill="#f7df7a" stroke="#c9a43a" stroke-width="0.9"/><path d="M11 6.5L17 10.5L11 14.5V12H3V9H11Z" fill="#f7df7a" stroke="#c9a43a" stroke-width="0.9"/></svg>
<svg style="left:1464px;top:101px" width="14" height="17" viewBox="0 0 14 17"><path d="M0.5 0.5H9L13.5 5V16.5H0.5Z" fill="#b0b0b0" stroke="#9a9a9a"/></svg>
<svg style="left:1485px;top:101px" width="17" height="17" viewBox="0 0 17 17"><path d="M0.5 0.5H14L16.5 3V16.5H0.5Z" fill="#3a44b0" stroke="#2a3290"/><rect x="3" y="1" width="10" height="6" fill="#e8ecff"/><rect x="4" y="11" width="9" height="5.5" fill="#f0f0f0"/><rect x="9" y="12" width="2" height="3" fill="#3a44b0"/></svg>
<svg style="left:1508px;top:101px" width="17" height="17" viewBox="0 0 17 17"><rect x="0.5" y="0.5" width="16" height="14" fill="#eef3f8" stroke="#8aa0b8"/><path d="M0.5 4.5H16.5M0.5 8.5H16.5M5.5 0.5V14.5M11 0.5V14.5" stroke="#8aa0b8"/><rect x="1" y="5" width="9" height="6" fill="#3a8aa0"/><rect x="12" y="1" width="4" height="3" fill="#e0c040"/></svg>
<div class="a" style="left:1248px;top:121px;width:280px;height:512px;background:#fff;border:1px solid #c8c8c8"></div>
<div class="clip" style="left:1249px;top:122px;width:260px;height:510px">
<div class="a" style="left:0px;top:0px;width:260px;height:15px;background:#ffffff"></div>
<div class="a" style="left:0px;top:15px;width:260px;height:15px;background:#f3f1c8"></div>
<div class="a" style="left:0px;top:30px;width:260px;height:15px;background:#f3f1c8"></div>
<div class="a" style="left:0px;top:45px;width:260px;height:15px;background:#f3f1c8"></div>
<div class="a" style="left:0px;top:60px;width:260px;height:15px;background:#f3f1c8"></div>
<div class="a" style="left:0px;top:75px;width:260px;height:15px;background:#f3f1c8"></div>
<div class="a" style="left:0px;top:90px;width:260px;height:15px;background:#f3f1c8"></div>
<div class="a" style="left:0px;top:105px;width:260px;height:15px;background:#c1e3ea"></div>
<div class="a" style="left:33px;top:8px;width:1px;height:112px;background:repeating-linear-gradient(#b0b0b0 0 1px,transparent 1px 2px)"></div>
<div class="a" style="left:5px;top:1px;width:14px;height:14px;background:#cfe4f8;border:1px solid #5a7a9a"></div>
<div class="a" style="left:35px;top:8px;width:8px;height:1px;background:repeating-linear-gradient(90deg,#b0b0b0 0 1px,transparent 1px 2px)"></div>
<div class="t" style="left:45px;top:3px;">(Select all)</div>
<div class="a" style="left:5px;top:16px;width:14px;height:14px;background:#fff;border:1px solid #4a4a40"></div>
<svg style="left:7px;top:19px" width="10" height="8" viewBox="0 0 10 8"><path d="M1 5L3.5 7L9 2" stroke="#444" stroke-width="1.1" fill="none"/></svg>
<svg style="left:28px;top:18px" width="10" height="10" viewBox="0 0 10 10"><rect x="0.5" y="0.5" width="9" height="9" fill="url(#gbox)" stroke="#a2a2a2"/><rect x="2.2" y="4.3" width="5.6" height="1.5" fill="#34427a"/><rect x="4.25" y="2.2" width="1.5" height="5.6" fill="#34427a"/></svg>
<div class="a" style="left:39px;top:23px;width:4px;height:1px;background:repeating-linear-gradient(90deg,#b0b0b0 0 1px,transparent 1px 2px)"></div>
<div class="t" style="left:45px;top:18px;">Key</div>
<div class="a" style="left:5px;top:31px;width:14px;height:14px;background:#fff;border:1px solid #4a4a40"></div>
<svg style="left:7px;top:34px" width="10" height="8" viewBox="0 0 10 8"><path d="M1 5L3.5 7L9 2" stroke="#444" stroke-width="1.1" fill="none"/></svg>
<svg style="left:28px;top:33px" width="10" height="10" viewBox="0 0 10 10"><rect x="0.5" y="0.5" width="9" height="9" fill="url(#gbox)" stroke="#a2a2a2"/><rect x="2.2" y="4.3" width="5.6" height="1.5" fill="#34427a"/><rect x="4.25" y="2.2" width="1.5" height="5.6" fill="#34427a"/></svg>
<div class="a" style="left:39px;top:38px;width:4px;height:1px;background:repeating-linear-gradient(90deg,#b0b0b0 0 1px,transparent 1px 2px)"></div>
<div class="t" style="left:45px;top:33px;">Preview</div>
<div class="a" style="left:5px;top:46px;width:14px;height:14px;background:#fff;border:1px solid #4a4a40"></div>
<svg style="left:7px;top:49px" width="10" height="8" viewBox="0 0 10 8"><path d="M1 5L3.5 7L9 2" stroke="#444" stroke-width="1.1" fill="none"/></svg>
<svg style="left:28px;top:48px" width="10" height="10" viewBox="0 0 10 10"><rect x="0.5" y="0.5" width="9" height="9" fill="url(#gbox)" stroke="#a2a2a2"/><rect x="2.2" y="4.3" width="5.6" height="1.5" fill="#34427a"/><rect x="4.25" y="2.2" width="1.5" height="5.6" fill="#34427a"/></svg>
<div class="a" style="left:39px;top:53px;width:4px;height:1px;background:repeating-linear-gradient(90deg,#b0b0b0 0 1px,transparent 1px 2px)"></div>
<div class="t" style="left:45px;top:48px;">Classification</div>
<div class="a" style="left:5px;top:61px;width:14px;height:14px;background:#fff;border:1px solid #4a4a40"></div>
<svg style="left:7px;top:64px" width="10" height="8" viewBox="0 0 10 8"><path d="M1 5L3.5 7L9 2" stroke="#444" stroke-width="1.1" fill="none"/></svg>
<svg style="left:28px;top:63px" width="10" height="10" viewBox="0 0 10 10"><rect x="0.5" y="0.5" width="9" height="9" fill="url(#gbox)" stroke="#a2a2a2"/><rect x="2.2" y="4.3" width="5.6" height="1.5" fill="#34427a"/><rect x="4.25" y="2.2" width="1.5" height="5.6" fill="#34427a"/></svg>
<div class="a" style="left:39px;top:68px;width:4px;height:1px;background:repeating-linear-gradient(90deg,#b0b0b0 0 1px,transparent 1px 2px)"></div>
<div class="t" style="left:45px;top:63px;">Cache</div>
<div class="a" style="left:5px;top:76px;width:14px;height:14px;background:#fff;border:1px solid #4a4a40"></div>
<svg style="left:28px;top:78px" width="10" height="10" viewBox="0 0 10 10"><rect x="0.5" y="0.5" width="9" height="9" fill="url(#gbox)" stroke="#a2a2a2"/><rect x="2.2" y="4.3" width="5.6" height="1.5" fill="#34427a"/><rect x="4.25" y="2.2" width="1.5" height="5.6" fill="#34427a"/></svg>
<div class="a" style="left:39px;top:83px;width:4px;height:1px;background:repeating-linear-gradient(90deg,#b0b0b0 0 1px,transparent 1px 2px)"></div>
<div class="t" style="left:45px;top:78px;">Internal features</div>
<div class="a" style="left:5px;top:91px;width:14px;height:14px;background:#fff;border:1px solid #4a4a40"></div>
<svg style="left:28px;top:93px" width="10" height="10" viewBox="0 0 10 10"><rect x="0.5" y="0.5" width="9" height="9" fill="url(#gbox)" stroke="#a2a2a2"/><rect x="2.2" y="4.3" width="5.6" height="1.5" fill="#34427a"/><rect x="4.25" y="2.2" width="1.5" height="5.6" fill="#34427a"/></svg>
<div class="a" style="left:39px;top:98px;width:4px;height:1px;background:repeating-linear-gradient(90deg,#b0b0b0 0 1px,transparent 1px 2px)"></div>
<div class="t" style="left:45px;top:93px;">Process</div>
<div class="a" style="left:5px;top:106px;width:14px;height:14px;background:#fff;border:1px solid #4a4a40"></div>
<svg style="left:7px;top:109px" width="10" height="8" viewBox="0 0 10 8"><path d="M1 5L3.5 7L9 2" stroke="#444" stroke-width="1.1" fill="none"/></svg>
<svg style="left:28px;top:108px" width="10" height="10" viewBox="0 0 10 10"><rect x="0.5" y="0.5" width="9" height="9" fill="url(#gbox)" stroke="#a2a2a2"/><rect x="2.2" y="4.3" width="5.6" height="1.5" fill="#34427a"/></svg>
<div class="a" style="left:39px;top:113px;width:4px;height:1px;background:repeating-linear-gradient(90deg,#b0b0b0 0 1px,transparent 1px 2px)"></div>
<div class="t" style="left:45px;top:108px;">Global features</div>
<div class="a" style="left:52px;top:120px;width:1px;height:315px;background:repeating-linear-gradient(#b0b0b0 0 1px,transparent 1px 2px)"></div>
<div class="a" style="left:53px;top:130px;width:10px;height:1px;background:repeating-linear-gradient(90deg,#b0b0b0 0 1px,transparent 1px 2px)"></div>
<div class="a" style="left:66px;top:124px;width:31px;height:12px;background:linear-gradient(90deg,#a2e0a2,#c4c4c4)"></div>
<div class="t" style="left:69px;top:125.30000000000001px;font-size:9.8px;color:#123812;-webkit-text-stroke:0.15px #000">Text</div>
<div class="t" style="left:101px;top:125.30000000000001px;color:#9a9a9a">Key with revision</div>
<div class="a" style="left:53px;top:149px;width:10px;height:1px;background:repeating-linear-gradient(90deg,#b0b0b0 0 1px,transparent 1px 2px)"></div>
<div class="a" style="left:66px;top:143px;width:31px;height:12px;background:linear-gradient(90deg,#a2e0a2,#ffffff)"></div>
<div class="t" style="left:69px;top:144.40000000000003px;font-size:9.8px;color:#123812;-webkit-text-stroke:0.15px #000">Text</div>
<div class="t" style="left:101px;top:144.40000000000003px;color:#1e1e1e">Description (CAD)</div>
<div class="a" style="left:53px;top:168px;width:10px;height:1px;background:repeating-linear-gradient(90deg,#b0b0b0 0 1px,transparent 1px 2px)"></div>
<div class="a" style="left:66px;top:162px;width:31px;height:12px;background:linear-gradient(90deg,#a2e0a2,#ffffff)"></div>
<div class="t" style="left:69px;top:163.5px;font-size:9.8px;color:#123812;-webkit-text-stroke:0.15px #000">Text</div>
<div class="t" style="left:101px;top:163.5px;color:#1e1e1e">Material (CAD)</div>
<div class="a" style="left:53px;top:188px;width:10px;height:1px;background:repeating-linear-gradient(90deg,#b0b0b0 0 1px,transparent 1px 2px)"></div>
<div class="a" style="left:66px;top:182px;width:31px;height:12px;background:linear-gradient(90deg,#a2e0a2,#ffffff)"></div>
<div class="t" style="left:69px;top:182.60000000000002px;font-size:9.8px;color:#123812;-webkit-text-stroke:0.15px #000">Text</div>
<div class="t" style="left:101px;top:182.60000000000002px;color:#1e1e1e">Material ID</div>
<div class="a" style="left:53px;top:207px;width:10px;height:1px;background:repeating-linear-gradient(90deg,#b0b0b0 0 1px,transparent 1px 2px)"></div>
<div class="a" style="left:66px;top:201px;width:31px;height:12px;background:linear-gradient(90deg,#a2e0a2,#ffffff)"></div>
<div class="t" style="left:69px;top:201.70000000000005px;font-size:9.8px;color:#123812;-webkit-text-stroke:0.15px #000">Text</div>
<div class="t" style="left:101px;top:201.70000000000005px;color:#1e1e1e">Material description</div>
<div class="a" style="left:53px;top:226px;width:10px;height:1px;background:repeating-linear-gradient(90deg,#b0b0b0 0 1px,transparent 1px 2px)"></div>
<div class="a" style="left:66px;top:220px;width:31px;height:12px;background:linear-gradient(90deg,#a2e0a2,#c4c4c4)"></div>
<div class="t" style="left:69px;top:220.8px;font-size:9.8px;color:#123812;-webkit-text-stroke:0.15px #000">Text</div>
<div class="t" style="left:101px;top:220.8px;color:#9a9a9a">Standard</div>
<div class="a" style="left:53px;top:245px;width:10px;height:1px;background:repeating-linear-gradient(90deg,#b0b0b0 0 1px,transparent 1px 2px)"></div>
<div class="a" style="left:66px;top:239px;width:31px;height:12px;background:linear-gradient(90deg,#a4c4ec,#c4c4c4)"></div>
<div class="t" style="left:69px;top:239.90000000000003px;font-size:9.8px;color:#0c1830;-webkit-text-stroke:0.15px #000">Float</div>
<div class="t" style="left:101px;top:239.90000000000003px;color:#9a9a9a">Volume</div>
<div class="a" style="left:53px;top:264px;width:10px;height:1px;background:repeating-linear-gradient(90deg,#b0b0b0 0 1px,transparent 1px 2px)"></div>
<div class="a" style="left:66px;top:258px;width:31px;height:12px;background:linear-gradient(90deg,#a4c4ec,#ffffff)"></div>
<div class="t" style="left:69px;top:259.0px;font-size:9.8px;color:#0c1830;-webkit-text-stroke:0.15px #000">Float</div>
<div class="a" style="left:98px;top:255px;width:31px;height:18px;background:#0a78d2"></div>
<div class="t" style="left:101px;top:259.0px;color:#e6f3ff">Mass</div>
<div class="a" style="left:53px;top:283px;width:10px;height:1px;background:repeating-linear-gradient(90deg,#b0b0b0 0 1px,transparent 1px 2px)"></div>
<div class="a" style="left:66px;top:277px;width:31px;height:12px;background:linear-gradient(90deg,#a4c4ec,#c4c4c4)"></div>
<div class="t" style="left:69px;top:278.1px;font-size:9.8px;color:#0c1830;-webkit-text-stroke:0.15px #000">Float</div>
<div class="t" style="left:101px;top:278.1px;color:#9a9a9a">weld weight</div>
<div class="a" style="left:53px;top:302px;width:10px;height:1px;background:repeating-linear-gradient(90deg,#b0b0b0 0 1px,transparent 1px 2px)"></div>
<div class="a" style="left:66px;top:296px;width:31px;height:12px;background:linear-gradient(90deg,#a4c4ec,#c4c4c4)"></div>
<div class="t" style="left:69px;top:297.20000000000005px;font-size:9.8px;color:#0c1830;-webkit-text-stroke:0.15px #000">Float</div>
<div class="t" style="left:101px;top:297.20000000000005px;color:#9a9a9a">Area</div>
<div class="a" style="left:53px;top:321px;width:10px;height:1px;background:repeating-linear-gradient(90deg,#b0b0b0 0 1px,transparent 1px 2px)"></div>
<div class="a" style="left:66px;top:315px;width:31px;height:12px;background:linear-gradient(90deg,#a2e0a2,#c4c4c4)"></div>
<div class="t" style="left:69px;top:316.3px;font-size:9.8px;color:#123812;-webkit-text-stroke:0.15px #000">Text</div>
<div class="t" style="left:101px;top:316.3px;color:#9a9a9a">EF UserInteract</div>
<div class="a" style="left:53px;top:340px;width:10px;height:1px;background:repeating-linear-gradient(90deg,#b0b0b0 0 1px,transparent 1px 2px)"></div>
<div class="a" style="left:66px;top:334px;width:31px;height:12px;background:linear-gradient(90deg,#a2e0a2,#c4c4c4)"></div>
<div class="t" style="left:69px;top:335.40000000000003px;font-size:9.8px;color:#123812;-webkit-text-stroke:0.15px #000">Text</div>
<div class="t" style="left:101px;top:335.40000000000003px;color:#9a9a9a">ERP price unit</div>
<div class="a" style="left:53px;top:360px;width:10px;height:1px;background:repeating-linear-gradient(90deg,#b0b0b0 0 1px,transparent 1px 2px)"></div>
<div class="a" style="left:66px;top:354px;width:31px;height:12px;background:linear-gradient(90deg,#a4c4ec,#c4c4c4)"></div>
<div class="t" style="left:69px;top:354.5px;font-size:9.8px;color:#0c1830;-webkit-text-stroke:0.15px #000">Float</div>
<div class="t" style="left:101px;top:354.5px;color:#9a9a9a">ERP price</div>
<div class="a" style="left:53px;top:379px;width:10px;height:1px;background:repeating-linear-gradient(90deg,#b0b0b0 0 1px,transparent 1px 2px)"></div>
<div class="a" style="left:66px;top:373px;width:31px;height:12px;background:linear-gradient(90deg,#a2e0a2,#c4c4c4)"></div>
<div class="t" style="left:69px;top:373.6px;font-size:9.8px;color:#123812;-webkit-text-stroke:0.15px #000">Text</div>
<div class="t" style="left:101px;top:373.6px;color:#9a9a9a">Object type</div>
<div class="a" style="left:53px;top:398px;width:10px;height:1px;background:repeating-linear-gradient(90deg,#b0b0b0 0 1px,transparent 1px 2px)"></div>
<div class="a" style="left:66px;top:392px;width:31px;height:12px;background:linear-gradient(90deg,#a4c4ec,#c4c4c4)"></div>
<div class="t" style="left:69px;top:392.70000000000005px;font-size:9.8px;color:#0c1830;-webkit-text-stroke:0.15px #000">Float</div>
<div class="t" style="left:101px;top:392.70000000000005px;color:#9a9a9a">Manual price [EUR]</div>
<div class="a" style="left:53px;top:417px;width:10px;height:1px;background:repeating-linear-gradient(90deg,#b0b0b0 0 1px,transparent 1px 2px)"></div>
<div class="a" style="left:66px;top:411px;width:31px;height:12px;background:linear-gradient(90deg,#a2e0a2,#ffffff)"></div>
<div class="t" style="left:69px;top:411.79999999999995px;font-size:9.8px;color:#123812;-webkit-text-stroke:0.15px #000">Text</div>
<div class="t" style="left:101px;top:411.79999999999995px;color:#1e1e1e">Dimensions flattened [mm]</div>
<div class="a" style="left:53px;top:436px;width:10px;height:1px;background:repeating-linear-gradient(90deg,#b0b0b0 0 1px,transparent 1px 2px)"></div>
<div class="a" style="left:66px;top:430px;width:31px;height:12px;background:linear-gradient(90deg,#a2e0a2,#ffffff)"></div>
<div class="t" style="left:69px;top:430.9000000000001px;font-size:9.8px;color:#123812;-webkit-text-stroke:0.15px #000">Text</div>
<div class="t" style="left:101px;top:430.9000000000001px;color:#1e1e1e">Dimensions [mm]</div>
<div class="a" style="left:0px;top:445px;width:260px;height:15px;background:#bfe2ea"></div>
<div class="a" style="left:0px;top:460px;width:260px;height:15px;background:#bfe2ea"></div>
<div class="a" style="left:0px;top:475px;width:260px;height:15px;background:#fde4e4"></div>
<div class="a" style="left:0px;top:490px;width:260px;height:15px;background:#f9cfcf"></div>
<div class="a" style="left:0px;top:505px;width:260px;height:15px;background:#f4b8b8"></div>
<div class="a" style="left:33px;top:120px;width:1px;height:390px;background:repeating-linear-gradient(#b0b0b0 0 1px,transparent 1px 2px)"></div>
<div class="a" style="left:5px;top:446px;width:14px;height:14px;background:#fff;border:1px solid #4a4a40"></div>
<svg style="left:7px;top:449px" width="10" height="8" viewBox="0 0 10 8"><path d="M1 5L3.5 7L9 2" stroke="#444" stroke-width="1.1" fill="none"/></svg>
<svg style="left:28px;top:448px" width="10" height="10" viewBox="0 0 10 10"><rect x="0.5" y="0.5" width="9" height="9" fill="url(#gbox)" stroke="#a2a2a2"/><rect x="2.2" y="4.3" width="5.6" height="1.5" fill="#34427a"/><rect x="4.25" y="2.2" width="1.5" height="5.6" fill="#34427a"/></svg>
<div class="a" style="left:39px;top:453px;width:4px;height:1px;background:repeating-linear-gradient(90deg,#b0b0b0 0 1px,transparent 1px 2px)"></div>
<div class="t" style="left:45px;top:448px;">Length x width x height</div>
<div class="a" style="left:5px;top:461px;width:14px;height:14px;background:#fff;border:1px solid #4a4a40"></div>
<svg style="left:7px;top:464px" width="10" height="8" viewBox="0 0 10 8"><path d="M1 5L3.5 7L9 2" stroke="#444" stroke-width="1.1" fill="none"/></svg>
<svg style="left:28px;top:463px" width="10" height="10" viewBox="0 0 10 10"><rect x="0.5" y="0.5" width="9" height="9" fill="url(#gbox)" stroke="#a2a2a2"/><rect x="2.2" y="4.3" width="5.6" height="1.5" fill="#34427a"/><rect x="4.25" y="2.2" width="1.5" height="5.6" fill="#34427a"/></svg>
<div class="a" style="left:39px;top:468px;width:4px;height:1px;background:repeating-linear-gradient(90deg,#b0b0b0 0 1px,transparent 1px 2px)"></div>
<div class="t" style="left:45px;top:463px;">Length x diameter</div>
<div class="a" style="left:5px;top:476px;width:14px;height:14px;background:#fff;border:1px solid #4a4a40"></div>
<svg style="left:28px;top:478px" width="10" height="10" viewBox="0 0 10 10"><rect x="0.5" y="0.5" width="9" height="9" fill="url(#gbox)" stroke="#a2a2a2"/><rect x="2.2" y="4.3" width="5.6" height="1.5" fill="#34427a"/><rect x="4.25" y="2.2" width="1.5" height="5.6" fill="#34427a"/></svg>
<div class="a" style="left:39px;top:483px;width:4px;height:1px;background:repeating-linear-gradient(90deg,#b0b0b0 0 1px,transparent 1px 2px)"></div>
<div class="t" style="left:45px;top:478px;">Surface finish</div>
<div class="a" style="left:5px;top:491px;width:14px;height:14px;background:#fff;border:1px solid #4a4a40"></div>
<svg style="left:28px;top:493px" width="10" height="10" viewBox="0 0 10 10"><rect x="0.5" y="0.5" width="9" height="9" fill="url(#gbox)" stroke="#a2a2a2"/><rect x="2.2" y="4.3" width="5.6" height="1.5" fill="#34427a"/><rect x="4.25" y="2.2" width="1.5" height="5.6" fill="#34427a"/></svg>
<div class="a" style="left:39px;top:498px;width:4px;height:1px;background:repeating-linear-gradient(90deg,#b0b0b0 0 1px,transparent 1px 2px)"></div>
<div class="t" style="left:45px;top:493px;">Form and location tolerances</div>
<div class="a" style="left:5px;top:506px;width:14px;height:14px;background:#fff;border:1px solid #4a4a40"></div>
<svg style="left:28px;top:508px" width="10" height="10" viewBox="0 0 10 10"><rect x="0.5" y="0.5" width="9" height="9" fill="url(#gbox)" stroke="#a2a2a2"/><rect x="2.2" y="4.3" width="5.6" height="1.5" fill="#34427a"/><rect x="4.25" y="2.2" width="1.5" height="5.6" fill="#34427a"/></svg>
<div class="a" style="left:39px;top:513px;width:4px;height:1px;background:repeating-linear-gradient(90deg,#b0b0b0 0 1px,transparent 1px 2px)"></div>
<div class="a" style="left:43px;top:505px;width:160px;height:6px;background:#f0a8a8"></div>
</div>
<div class="a" style="left:1509px;top:122px;width:18px;height:510px;background:#f0f0f0"></div>
<svg style="left:1514px;top:127px" width="9" height="6" viewBox="0 0 9 6"><path d="M1 5L4.5 1.5L8 5" stroke="#555" stroke-width="1.3" fill="none"/></svg>
<div class="a" style="left:1510px;top:139px;width:16px;height:425px;background:#cdcdcd"></div>
<svg style="left:1514px;top:621px" width="9" height="6" viewBox="0 0 9 6"><path d="M1 1L4.5 4.5L8 1" stroke="#555" stroke-width="1.3" fill="none"/></svg>
<div class="t" style="left:362px;top:644px;color:#333">Element count:</div>
<div class="a" style="left:436px;top:640px;width:1083px;height:18px;background:#f0f0f0;border:1px solid #b4b4b4"></div>
<div class="t" style="left:440px;top:644px;color:#222">13 rows with 56 columns (1 row(s) and 1 column(s) selected)</div>
</body></html>
